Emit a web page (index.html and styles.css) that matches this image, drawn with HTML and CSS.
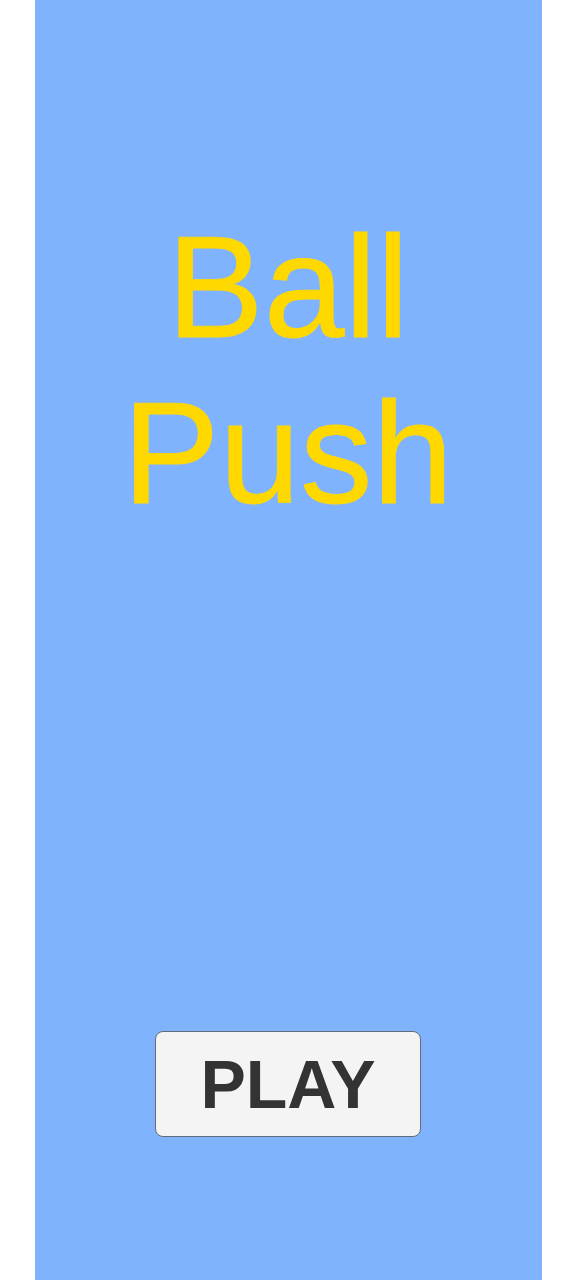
FILE: index.html
```html
<!DOCTYPE html>
<html lang="en">
<head>
    <meta charset="UTF-8">
    <meta name="viewport" content="width=device-width, initial-scale=1.0">
    <title>Ball Push</title>
    <link rel="stylesheet" href="styles.css">
</head>
<body>
    <main class="screen">
        <h1 class="title">Ball<br>Push</h1>
        <button class="play-btn">PLAY</button>
    </main>
</body>
</html>
```

FILE: styles.css
```css
body { margin: 0; padding: 0; background: #ffffff; font-family: "Liberation Sans", Arial, sans-serif; }
.screen {
    width: 507px;
    height: 1280px;
    margin: 0 auto;
    box-sizing: border-box;
    background: #80b3fd;
    display: flex;
    flex-direction: column;
    align-items: center;
    justify-content: space-between;
    padding: 204px 0 143px;
}
.title {
    margin: 0;
    color: #ffd800;
    font-size: 145px;
    font-weight: normal;
    line-height: 166px;
    text-align: center;
    -webkit-text-stroke: 0.8px #ffd800;
}
.play-btn {
    width: 266px;
    height: 106px;
    box-sizing: border-box;
    background: #f4f4f4;
    color: #333333;
    border: 1.5px solid #656a78;
    border-radius: 8px;
    font-family: "Liberation Sans", Arial, sans-serif;
    font-weight: bold;
    font-size: 68px;
    padding: 0;
    cursor: pointer;
}
```
